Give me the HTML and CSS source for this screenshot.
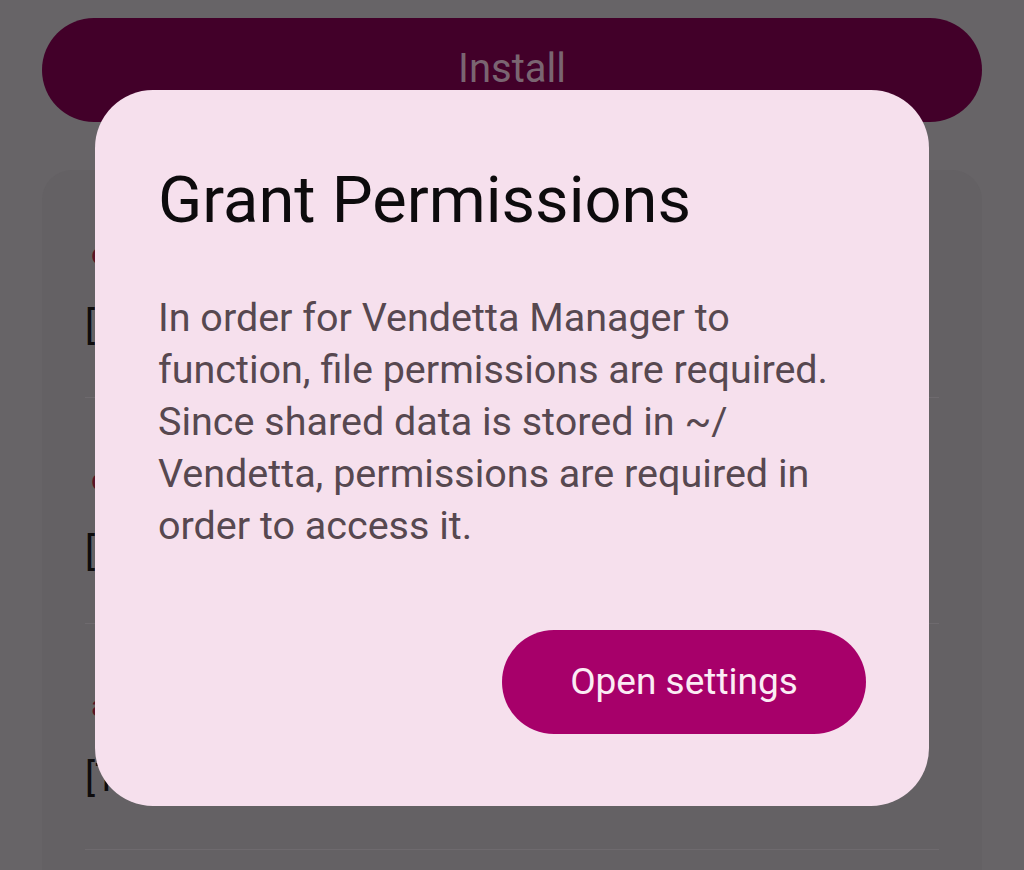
FILE: index.html
```html
<!DOCTYPE html>
<html lang="en">
<head>
<meta charset="utf-8">
<title>Vendetta Manager</title>
<link rel="stylesheet" href="styles.css">
</head>
<body>
<main class="screen">
  <button class="install-btn">Install</button>
  <section class="commits">
    <div class="commit">
      <div class="commit-hash">e4c1a9f</div>
      <div class="commit-msg">[Bot] Update</div>
    </div>
    <div class="commit">
      <div class="commit-hash">c2b7d10</div>
      <div class="commit-msg">[Plugins] Fix</div>
    </div>
    <div class="commit">
      <div class="commit-hash">a90f3e2</div>
      <div class="commit-msg">[Translations]</div>
    </div>
  </section>
</main>

<div class="dialog" role="dialog">
  <h1 class="dialog-title">Grant Permissions</h1>
  <p class="dialog-text">In order for Vendetta Manager to<br>function, file permissions are required.<br>Since shared data is stored in ~/<br>Vendetta, permissions are required in<br>order to access it.</p>
  <div class="dialog-actions">
    <button class="settings-btn">Open settings</button>
  </div>
</div>
</body>
</html>
```
FILE: styles.css
```css
html, body {
  margin: 0;
  height: 100%;
  overflow: hidden;
}
body {
  background: #676467;
  font-family: Roboto, "Noto Sans", sans-serif;
  position: relative;
}
.screen {
  padding: 18px 42px 0;
  display: flex;
  flex-direction: column;
  gap: 48px;
}
.install-btn {
  height: 104px;
  border: 0;
  border-radius: 52px;
  background: #420029;
  color: #7a6571;
  font-family: Roboto, sans-serif;
  font-size: 40px;
  padding: 0 0 4px;
  width: 100%;
}
.commits {
  background: #646164;
  border-radius: 30px 30px 0 0;
  padding: 2px 43px 60px;
}
.commit {
  box-sizing: border-box;
  height: 226px;
  border-bottom: 1px solid #6e6a6e;
  padding-top: 62px;
  display: flex;
  flex-direction: column;
  gap: 28px;
}
.commit-hash {
  font-size: 30px;
  line-height: 40px;
  color: #5c1426;
  padding-left: 6px;
}
.commit-msg {
  font-size: 38px;
  line-height: 48px;
  color: #0e0c0d;
  white-space: nowrap;
}
.dialog {
  position: absolute;
  left: 95px;
  top: 90px;
  width: 834px;
  box-sizing: border-box;
  padding: 72px 63px;
  background: #f6e0ed;
  border-radius: 58px;
  display: flex;
  flex-direction: column;
}
.dialog-title {
  margin: 0;
  font-weight: 400;
  font-size: 65px;
  line-height: 76px;
  color: #0d0b0d;
}
.dialog-text {
  margin: 54px 0 0;
  font-size: 39.5px;
  line-height: 52px;
  color: #574850;
  white-space: nowrap;
}
.dialog-actions {
  margin-top: 78px;
  display: flex;
  justify-content: flex-end;
}
.settings-btn {
  width: 364px;
  height: 104px;
  border: 0;
  border-radius: 52px;
  background: #a7006a;
  color: #fbecf4;
  font-family: Roboto, sans-serif;
  font-size: 37px;
  padding: 0 0 2px;
}
```
